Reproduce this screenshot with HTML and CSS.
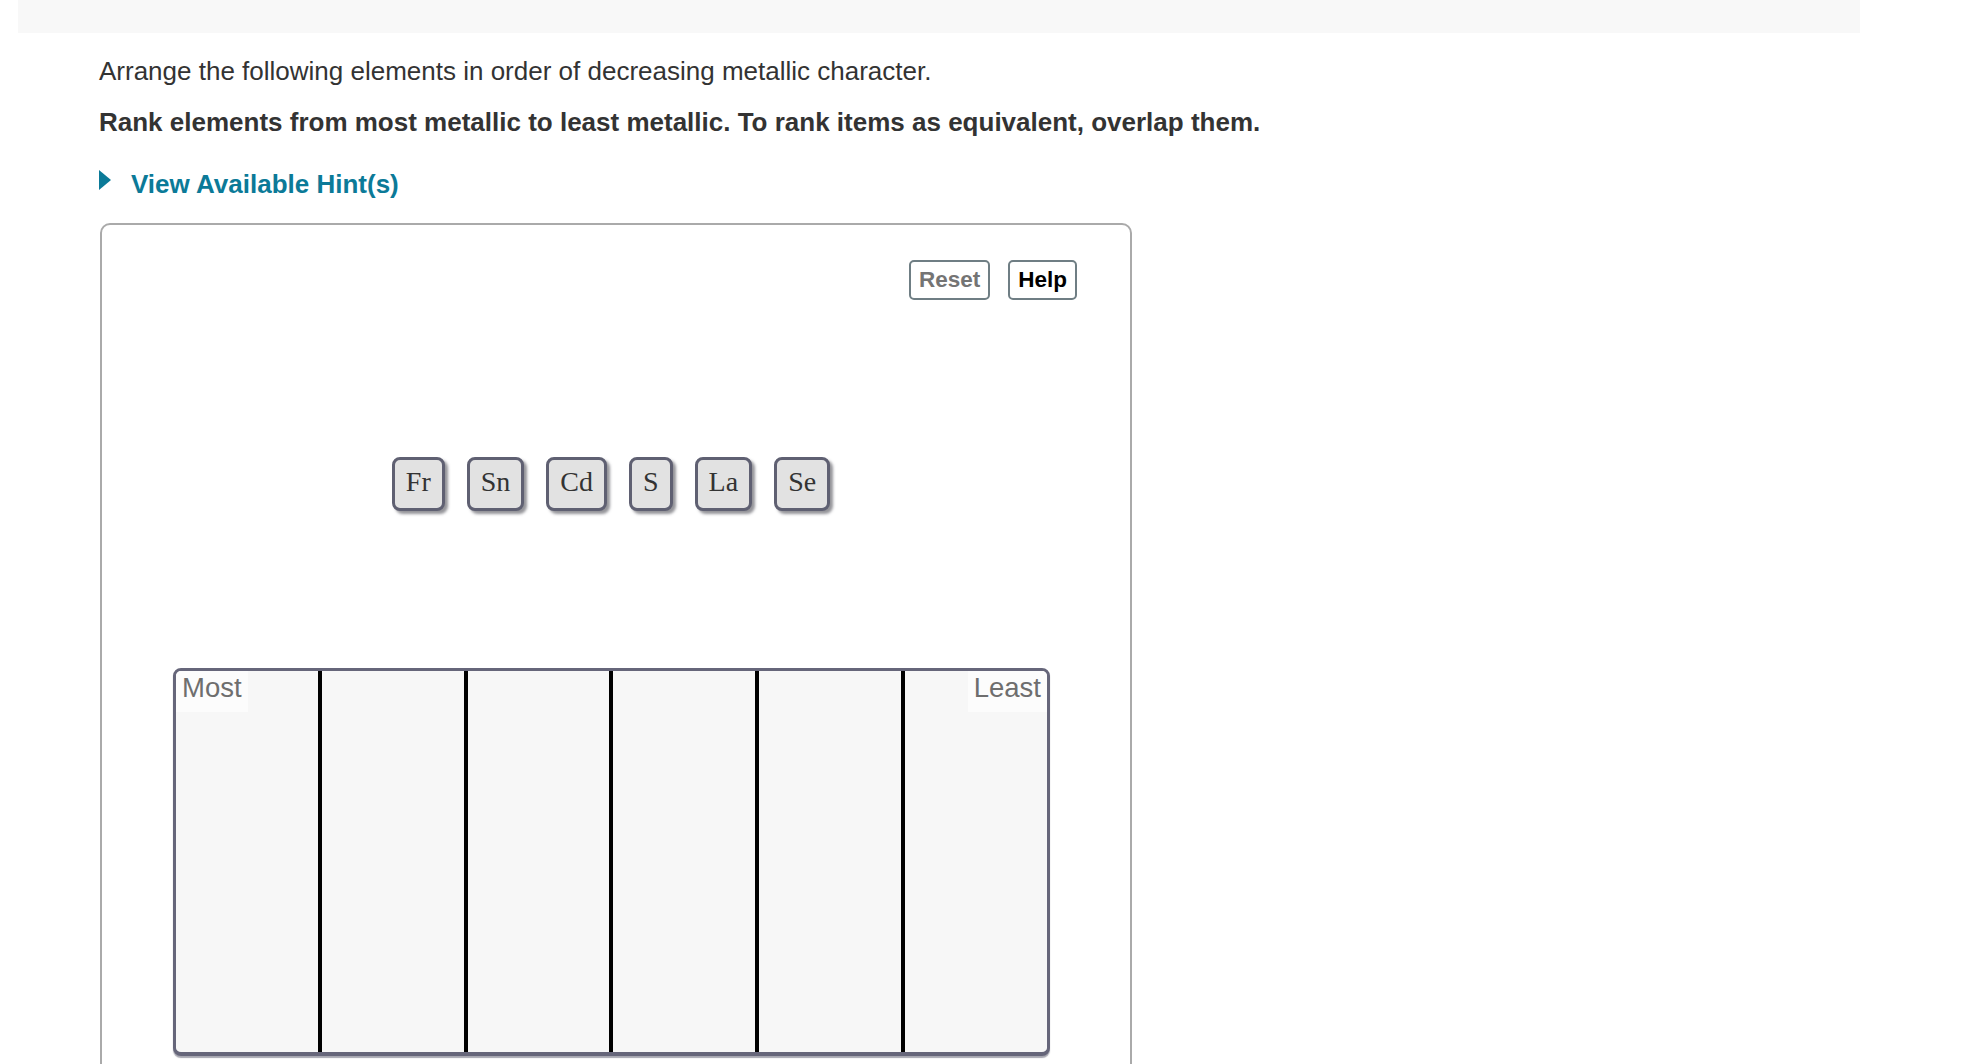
FILE: index.html
```html
<!DOCTYPE html>
<html lang="en">
<head>
<meta charset="utf-8">
<title>Ranking</title>
<link rel="stylesheet" href="styles.css">
</head>
<body>
<div class="topbar"></div>
<div class="content">
  <p class="question">Arrange the following elements in order of decreasing metallic character.</p>
  <p class="instruction">Rank elements from most metallic to least metallic. To rank items as equivalent, overlap them.</p>
  <div class="hint"><span class="hint-arrow"></span><span class="hint-text">View Available Hint(s)</span></div>
  <div class="widget">
    <div class="toolbar">
      <button class="btn btn-reset">Reset</button>
      <button class="btn btn-help">Help</button>
    </div>
    <div class="tiles">
      <div class="tile">Fr</div>
      <div class="tile">Sn</div>
      <div class="tile">Cd</div>
      <div class="tile">S</div>
      <div class="tile">La</div>
      <div class="tile">Se</div>
    </div>
    <div class="ranking">
      <div class="col"><span class="label label-most">Most</span></div>
      <div class="col"></div>
      <div class="col"></div>
      <div class="col"></div>
      <div class="col"></div>
      <div class="col col-last"><span class="label label-least">Least</span></div>
    </div>
  </div>
</div>
</body>
</html>
```
FILE: styles.css
```css
html, body {
  margin: 0;
  padding: 0;
  background: #ffffff;
  overflow: hidden;
}
body {
  font-family: "Liberation Sans", Arial, Helvetica, sans-serif;
  color: #333333;
  height: 1064px;
}
.topbar {
  height: 33px;
  margin-left: 18px;
  width: 1842px;
  background: #f8f8f8;
}
.content {
  margin-left: 99px;
}
.question {
  margin: 20px 0 0 0;
  font-size: 26px;
  line-height: 36px;
}
.instruction {
  margin: 15px 0 0 0;
  font-size: 26px;
  line-height: 36px;
  font-weight: bold;
}
.hint {
  margin-top: 26px;
  display: flex;
  align-items: center;
  height: 36px;
  color: #0b7a98;
}
.hint-arrow {
  width: 0;
  height: 0;
  border-top: 10px solid transparent;
  border-bottom: 10px solid transparent;
  border-left: 12px solid #0b7a98;
  margin-top: -8px;
  margin-right: 20px;
}
.hint-text {
  font-size: 26px;
  line-height: 36px;
  font-weight: bold;
}
.widget {
  margin-top: 21px;
  margin-left: 1px;
  width: 1028px;
  height: 880px;
  border: 2px solid #aaaaaa;
  border-radius: 10px;
  box-sizing: content-box;
}
.toolbar {
  display: flex;
  justify-content: flex-end;
  gap: 18px;
  margin-top: 35px;
  padding-right: 53px;
}
.btn {
  height: 40px;
  padding: 0 8px;
  border: 2px solid #6f7e84;
  border-radius: 5px;
  background: #ffffff;
  font-family: "Liberation Sans", Arial, Helvetica, sans-serif;
  font-size: 22.5px;
  font-weight: bold;
  line-height: 36px;
  box-sizing: border-box;
}
.btn-reset {
  color: #747474;
}
.btn-help {
  color: #000000;
}
.tiles {
  display: flex;
  justify-content: center;
  gap: 22px;
  margin-top: 157px;
  margin-left: 71px;
  width: 876px;
}
.tile {
  height: 54px;
  box-sizing: border-box;
  padding: 0 11px;
  border: 3px solid #5f6072;
  border-radius: 8px;
  background: #e2e2e2;
  box-shadow: 3px 3px 3px rgba(60, 60, 70, 0.55);
  font-family: "Liberation Serif", "Times New Roman", serif;
  font-size: 28px;
  line-height: 44px;
  color: #333333;
}
.ranking {
  display: flex;
  margin-top: 157px;
  margin-left: 71px;
  width: 877px;
  height: 388px;
  box-sizing: border-box;
  border: 3px solid #66667a;
  border-bottom-width: 4px;
  border-radius: 8px;
  background: #f7f7f7;
  box-shadow: 0 2px 1px rgba(80, 80, 100, 0.5);
  overflow: hidden;
}
.col {
  flex: 1 1 0;
  position: relative;
}
.col + .col {
  border-left: 4px solid #000000;
}
.label {
  position: absolute;
  top: 0;
  display: block;
  padding: 0 6px 7px 6px;
  font-size: 27.5px;
  line-height: 34px;
  color: #6e6e6e;
  background: #fcfcfc;
}
.label-most {
  left: 0;
}
.label-least {
  right: 0;
}
```
